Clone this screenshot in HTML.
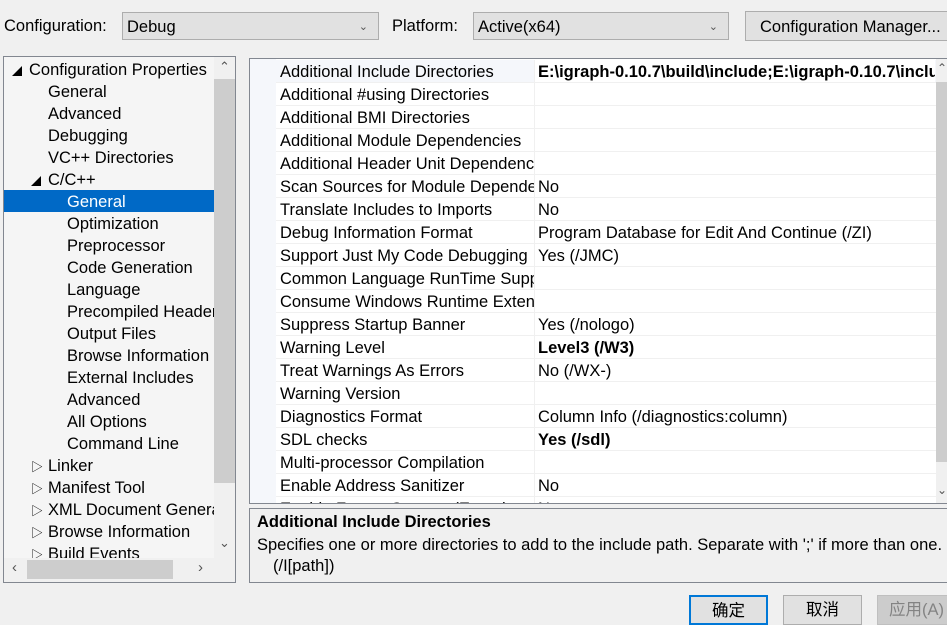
<!DOCTYPE html>
<html><head><meta charset="utf-8"><style>
*{box-sizing:border-box;margin:0;padding:0}
body{width:947px;height:616px;background:#f0f0f0;font-family:"Liberation Sans","Noto Sans CJK SC",sans-serif;font-size:16.5px;color:#000;position:relative;overflow:hidden}
.a{position:absolute;white-space:nowrap}
.combo{position:absolute;background:#e1e1e1;border:1px solid #adadad;height:28px;line-height:28px;padding-left:4px}
.combo .ar{position:absolute;right:10px;top:0;font-size:11px;color:#555}
.btn{position:absolute;background:#e1e1e1;border:1px solid #adadad;text-align:center}
.tree{position:absolute;left:3px;top:56px;width:233px;height:527px;border:1px solid #828790;background:#f5f5f5;overflow:hidden}
.tr{position:absolute;left:0;height:22px;line-height:24px;width:210px;white-space:nowrap;overflow:hidden}
.grid{position:absolute;left:249px;top:58px;width:698px;height:446px;border:1px solid #828790;border-right:none;background:#fff;overflow:hidden}
.row{position:absolute;left:26px;width:660px;height:23px;line-height:24px;border-bottom:1px solid #f0f0f0;white-space:nowrap}
.row .n{position:absolute;left:4px;width:254px;overflow:hidden}
.row .v{position:absolute;left:258px;width:401px;overflow:hidden;border-left:1px solid #f0f0f0;padding-left:3px;height:22px}
.t{font-size:10px;display:inline-block;width:17px}
.c{font-size:12px;display:inline-block;width:17px}
</style></head><body>
<div class="a" style="left:4px;top:17px">Configuration:</div>
<div class="combo" style="left:122px;top:12px;width:257px">Debug<span class="ar">&#8964;</span></div>
<div class="a" style="left:392px;top:17px">Platform:</div>
<div class="combo" style="left:473px;top:12px;width:256px">Active(x64)<span class="ar">&#8964;</span></div>
<div class="btn" style="left:745px;top:11px;width:210px;height:30px;line-height:30px;text-align:left;padding-left:14px">Configuration Manager...</div>

<div class="tree">
<div class="tr" style="top:1px;left:8px"><span class="t">&#9698;</span>Configuration Properties</div>
<div class="tr" style="top:23px;padding-left:44px">General</div>
<div class="tr" style="top:45px;padding-left:44px">Advanced</div>
<div class="tr" style="top:67px;padding-left:44px">Debugging</div>
<div class="tr" style="top:89px;padding-left:44px">VC++ Directories</div>
<div class="tr" style="top:111px;padding-left:27px"><span class="t">&#9698;</span>C/C++</div>
<div class="tr" style="top:133px;padding-left:63px;background:#0069c6;color:#fff">General</div>
<div class="tr" style="top:155px;padding-left:63px">Optimization</div>
<div class="tr" style="top:177px;padding-left:63px">Preprocessor</div>
<div class="tr" style="top:199px;padding-left:63px">Code Generation</div>
<div class="tr" style="top:221px;padding-left:63px">Language</div>
<div class="tr" style="top:243px;padding-left:63px">Precompiled Headers</div>
<div class="tr" style="top:265px;padding-left:63px">Output Files</div>
<div class="tr" style="top:287px;padding-left:63px">Browse Information</div>
<div class="tr" style="top:309px;padding-left:63px">External Includes</div>
<div class="tr" style="top:331px;padding-left:63px">Advanced</div>
<div class="tr" style="top:353px;padding-left:63px">All Options</div>
<div class="tr" style="top:375px;padding-left:63px">Command Line</div>
<div class="tr" style="top:397px;padding-left:27px"><span class="c">&#9655;</span>Linker</div>
<div class="tr" style="top:419px;padding-left:27px"><span class="c">&#9655;</span>Manifest Tool</div>
<div class="tr" style="top:441px;padding-left:27px"><span class="c">&#9655;</span>XML Document Generator</div>
<div class="tr" style="top:463px;padding-left:27px"><span class="c">&#9655;</span>Browse Information</div>
<div class="tr" style="top:485px;padding-left:27px;height:16px"><span class="c">&#9655;</span>Build Events</div>
<div class="a" style="left:210px;top:0;width:21px;height:501px;background:#f0f0f0"></div>
<div class="a" style="left:210px;top:22px;width:21px;height:404px;background:#cdcdcd"></div>
<div class="a" style="left:215px;top:2px;font-size:13px;color:#555">&#8963;</div>
<div class="a" style="left:215px;top:478px;font-size:13px;color:#555">&#8964;</div>
<div class="a" style="left:0;top:501px;width:231px;height:24px;background:#f0f0f0"></div>
<div class="a" style="left:23px;top:503px;width:146px;height:19px;background:#cdcdcd"></div>
<div class="a" style="left:8px;top:502px;font-size:15px;color:#555">&#8249;</div>
<div class="a" style="left:194px;top:502px;font-size:15px;color:#555">&#8250;</div>
</div>

<div class="grid">
<div class="a" style="left:0;top:0;width:26px;height:446px;background:#f5f7fb"></div>
<div class="row" style="top:1px;background:#f5f7fb"><span class="n">Additional Include Directories</span><span class="v" style="background:#fff;font-weight:bold">E:\igraph-0.10.7\build\include;E:\igraph-0.10.7\include</span></div>
<div class="row" style="top:24px"><span class="n">Additional #using Directories</span><span class="v"></span></div>
<div class="row" style="top:47px"><span class="n">Additional BMI Directories</span><span class="v"></span></div>
<div class="row" style="top:70px"><span class="n">Additional Module Dependencies</span><span class="v"></span></div>
<div class="row" style="top:93px"><span class="n">Additional Header Unit Dependencies</span><span class="v"></span></div>
<div class="row" style="top:116px"><span class="n">Scan Sources for Module Dependencies</span><span class="v">No</span></div>
<div class="row" style="top:139px"><span class="n">Translate Includes to Imports</span><span class="v">No</span></div>
<div class="row" style="top:162px"><span class="n">Debug Information Format</span><span class="v">Program Database for Edit And Continue (/ZI)</span></div>
<div class="row" style="top:185px"><span class="n">Support Just My Code Debugging</span><span class="v">Yes (/JMC)</span></div>
<div class="row" style="top:208px"><span class="n">Common Language RunTime Support</span><span class="v"></span></div>
<div class="row" style="top:231px"><span class="n">Consume Windows Runtime Extension</span><span class="v"></span></div>
<div class="row" style="top:254px"><span class="n">Suppress Startup Banner</span><span class="v">Yes (/nologo)</span></div>
<div class="row" style="top:277px"><span class="n">Warning Level</span><span class="v" style="font-weight:bold">Level3 (/W3)</span></div>
<div class="row" style="top:300px"><span class="n">Treat Warnings As Errors</span><span class="v">No (/WX-)</span></div>
<div class="row" style="top:323px"><span class="n">Warning Version</span><span class="v"></span></div>
<div class="row" style="top:346px"><span class="n">Diagnostics Format</span><span class="v">Column Info (/diagnostics:column)</span></div>
<div class="row" style="top:369px"><span class="n">SDL checks</span><span class="v" style="font-weight:bold">Yes (/sdl)</span></div>
<div class="row" style="top:392px"><span class="n">Multi-processor Compilation</span><span class="v"></span></div>
<div class="row" style="top:415px"><span class="n">Enable Address Sanitizer</span><span class="v">No</span></div>
<div class="row" style="top:438px"><span class="n">Enable Fuzzer Support (Experimental)</span><span class="v">No</span></div>
<div class="a" style="left:686px;top:0;width:12px;height:446px;background:#f0f0f0"></div>
<div class="a" style="left:686px;top:23px;width:12px;height:380px;background:#cdcdcd"></div>
<div class="a" style="left:687px;top:2px;font-size:12px;color:#555">&#8963;</div>
<div class="a" style="left:687px;top:424px;font-size:12px;color:#555">&#8964;</div>
</div>

<div class="a" style="left:249px;top:508px;width:700px;height:75px;border:1px solid #828790;border-right:none;background:#f0f0f0"></div>
<div class="a" style="left:257px;top:513px;font-weight:bold">Additional Include Directories</div>
<div class="a" style="left:257px;top:536px">Specifies one or more directories to add to the include path. Separate with ';' if more than one.</div>
<div class="a" style="left:273px;top:557px">(/I[path])</div>

<div class="btn" style="left:689px;top:595px;width:79px;height:30px;border:2px solid #0078d7;line-height:28px">确定</div>
<div class="btn" style="left:783px;top:595px;width:79px;height:30px;line-height:28px">取消</div>
<div class="btn" style="left:877px;top:595px;width:79px;height:30px;line-height:28px;background:#ccc;border-color:#bfbfbf;color:#838383">应用(A)</div>
</body></html>
